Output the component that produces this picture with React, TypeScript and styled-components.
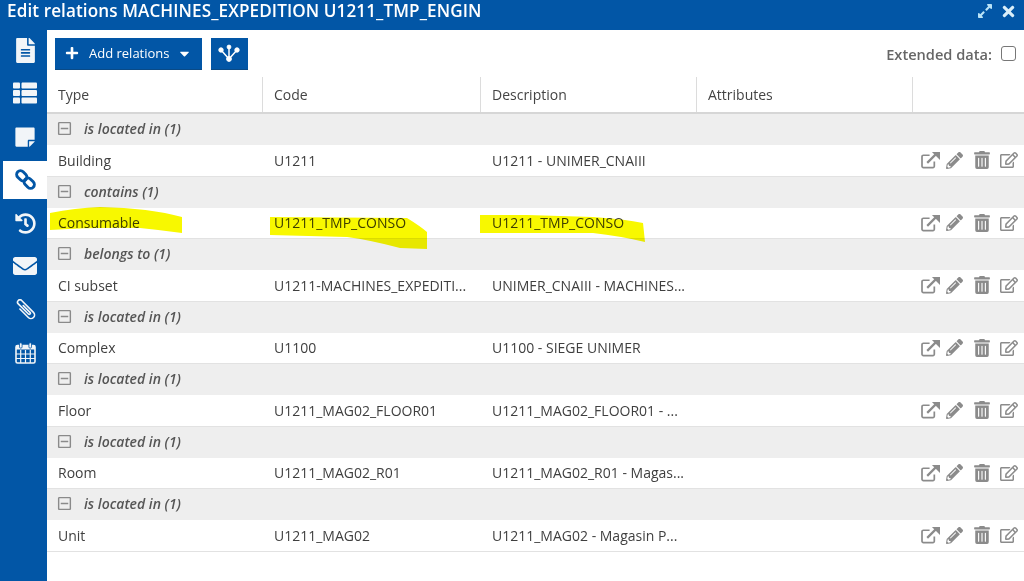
import React from "react";
import styled, { createGlobalStyle } from "styled-components";
import {
  FaCaretDown,
  FaEnvelope,
  FaExpandAlt,
  FaFileAlt,
  FaHistory,
  FaPencilAlt,
  FaPlus,
  FaRegEdit,
  FaRegMinusSquare,
  FaStickyNote,
  FaThList,
  FaTimes,
  FaTrashAlt,
} from "react-icons/fa";

const BLUE = "#0256a6";

const GlobalStyle = createGlobalStyle`
  html, body {
    margin: 0;
    padding: 0;
    background: #fff;
    overflow: hidden;
  }
  body {
    font-family: "Open Sans", "Liberation Sans", sans-serif;
    color: #3d3d3d;
  }
`;

const Page = styled.div`
  position: relative;
  width: 1024px;
  height: 581px;
  display: flex;
  flex-direction: column;
  overflow: hidden;
`;

const TitleBar = styled.header`
  height: 30px;
  flex: none;
  background: ${BLUE};
  color: #fff;
  display: flex;
  align-items: center;
  padding: 0 7.5px 0 7px;
  font-size: 17.1px;
  font-weight: 600;
`;

const Title = styled.div`
  flex: 1;
  margin-top: -9px;
  letter-spacing: 0.1px;
`;

const WindowButtons = styled.div`
  display: flex;
  align-items: center;
  gap: 6.5px;
  margin-top: -8px;
`;

const ExpandIcon = styled(FaExpandAlt)`
  color: #b9e3f7;
  font-size: 16px;
`;

const CloseIcon = styled(FaTimes)`
  color: #d9eef9;
  font-size: 17px;
`;

const Body = styled.div`
  flex: 1;
  display: flex;
  min-height: 0;
`;

const Sidebar = styled.nav`
  width: 47px;
  flex: none;
  background: ${BLUE};
  display: flex;
  flex-direction: column;
  gap: 5.3px;
  padding-top: 1px;
  box-sizing: border-box;
`;

const Tab = styled.div<{ $active?: boolean }>`
  height: 38px;
  flex: none;
  margin-left: 3px;
  display: flex;
  align-items: center;
  justify-content: center;
  color: ${(p) => (p.$active ? BLUE : "#f2f5f8")};
  background: ${(p) => (p.$active ? "#fff" : "transparent")};
`;

const Main = styled.main`
  flex: 1;
  min-width: 0;
  display: flex;
  flex-direction: column;
`;

const Toolbar = styled.div`
  height: 47px;
  flex: none;
  display: flex;
  align-items: center;
  padding: 0 8px 0 8px;
  gap: 9px;
`;

const ToolButton = styled.button`
  height: 32px;
  border: 0;
  border-bottom: 1px solid #0a4a86;
  background: ${BLUE};
  color: #fff;
  display: flex;
  align-items: center;
  padding: 0 10px;
  font-family: inherit;
  font-size: 13px;
`;

const GraphButton = styled(ToolButton)`
  padding: 0 7.5px;
`;

const AddLabel = styled.span`
  margin: 0 7px 0 10px;
`;

const Spacer = styled.div`
  flex: 1;
`;

const ExtendedLabel = styled.label`
  display: flex;
  align-items: center;
  gap: 9px;
  font-size: 14.6px;
  font-weight: 600;
  color: #666;
`;

const CheckBox = styled.span`
  width: 13px;
  height: 13px;
  border: 1px solid #777;
  border-radius: 3px;
  background: #fff;
`;

const columns = "216px 218px 216px 216px 1fr";

const HeaderRow = styled.div`
  height: 37px;
  flex: none;
  display: grid;
  grid-template-columns: ${columns};
  box-sizing: border-box;
  border-bottom: 2px solid #d6d6d6;
`;

const HeaderCell = styled.div`
  display: flex;
  align-items: center;
  padding-left: 11px;
  font-size: 14px;
  color: #444;
  border-right: 1px solid #dcdcdc;
  &:last-child {
    border-right: 0;
  }
`;

const GroupRow = styled.div`
  height: 31px;
  box-sizing: border-box;
  background: #eeeeee;
  display: flex;
  align-items: center;
  padding: 0 0 2px 10px;
  font-size: 14px;
  font-style: italic;
  font-weight: 600;
  color: #555;
`;

const GroupIcon = styled(FaRegMinusSquare)`
  font-size: 15px;
  color: #8a8a8a;
  margin-right: 12px;
`;

const DataRow = styled.div`
  height: 31.5px;
  box-sizing: border-box;
  display: grid;
  grid-template-columns: ${columns};
  border-bottom: 1px solid #e2e2e2;
  background: #fff;
`;

const DataCell = styled.div`
  display: flex;
  align-items: center;
  padding: 0 0 0 11px;
  font-size: 14px;
  color: #3f3f3f;
  white-space: nowrap;
  min-width: 0;
`;

const Actions = styled.div`
  display: flex;
  align-items: center;
  justify-content: flex-end;
  gap: 9.5px;
  padding-right: 6px;
  color: #8b8b8b;
  font-size: 18px;
`;

const PencilIcon = styled(FaPencilAlt)`
  font-size: 17px;
  margin-left: -4px;
`;

const HighlightLayer = styled.svg`
  position: absolute;
  left: 0;
  top: 0;
  width: 1024px;
  height: 581px;
  pointer-events: none;
  mix-blend-mode: multiply;
`;

const OpenIcon = () => (
  <svg width="20" height="18" viewBox="0 0 21 19" fill="none" stroke="currentColor">
    <path d="M14 11v5a1.5 1.5 0 0 1-1.5 1.5h-10A1.5 1.5 0 0 1 1 16V6a1.5 1.5 0 0 1 1.5-1.5H9" strokeWidth="1.800" />
    <path d="M6.5 12.5 16 3" strokeWidth="2.400" />
    <path d="M11.5 1h8.500v8.500z" fill="currentColor" stroke="none" />
  </svg>
);

const RelationGraphIcon = () => (
  <svg width="22" height="18" viewBox="0 0 22 18" fill="#fff" stroke="#fff">
    <circle cx="11" cy="3" r="1.900" />
    <circle cx="3" cy="6" r="2.200" />
    <circle cx="19" cy="6" r="2.200" />
    <circle cx="11" cy="15" r="2.400" />
    <path d="M11 3v12M3 6l8 9M19 6l-8 9" fill="none" strokeWidth="1.500" />
  </svg>
);

const LinkIcon = () => (
  <svg width="21" height="21" viewBox="-11 -11 22 22" fill="none" stroke="currentColor" strokeWidth="3">
    <g transform="rotate(45)">
      <rect x="-11.500" y="-4" width="12" height="8" rx="4" />
      <rect x="-0.500" y="-4" width="12" height="8" rx="4" />
    </g>
  </svg>
);

const ClipIcon = () => (
  <svg width="21" height="21" viewBox="-11 -11 22 22" fill="none" stroke="currentColor" strokeWidth="1.700">
    <path
      transform="rotate(-45)"
      d="M-3.800-4.500V8a3.800 3.800 0 0 0 7.600 0V-9.500a2.500 2.500 0 0 0-5 0V5.500a1.200 1.200 0 0 0 2.400 0V-4.500"
      strokeLinecap="round"
    />
  </svg>
);

const CalendarIcon = () => (
  <svg width="21" height="22" viewBox="0 0 21 22" fill="none" stroke="currentColor">
    <rect x="1" y="3.500" width="19" height="17.500" rx="1.500" strokeWidth="1.600" />
    <path d="M1 5.500h19" strokeWidth="4" />
    <path d="M1 12h19M1 16.500h19M5.700 8v13M10.500 8v13M15.300 8v13" strokeWidth="1.200" />
    <rect x="4.500" y="0.700" width="2.600" height="5.500" rx="1.300" fill="currentColor" stroke={BLUE} strokeWidth="0.800" />
    <rect x="13.900" y="0.700" width="2.600" height="5.500" rx="1.300" fill="currentColor" stroke={BLUE} strokeWidth="0.800" />
  </svg>
);

const tabs = [
  <FaFileAlt key="file" size={25} />,
  <FaThList key="list" size={24} />,
  <FaStickyNote key="note" size={22} />,
  <LinkIcon key="link" />,
  <FaHistory key="history" size={21} />,
  <FaEnvelope key="mail" size={24} />,
  <ClipIcon key="clip" />,
  <CalendarIcon key="calendar" />,
];

const relations = [
  { group: "is located in (1)", type: "Building", code: "U1211", description: "U1211 - UNIMER_CNAIII" },
  { group: "contains (1)", type: "Consumable", code: "U1211_TMP_CONSO", description: "U1211_TMP_CONSO" },
  {
    group: "belongs to (1)",
    type: "CI subset",
    code: "U1211-MACHINES_EXPEDITI...",
    description: "UNIMER_CNAIII - MACHINES...",
  },
  { group: "is located in (1)", type: "Complex", code: "U1100", description: "U1100 - SIEGE UNIMER" },
  {
    group: "is located in (1)",
    type: "Floor",
    code: "U1211_MAG02_FLOOR01",
    description: "U1211_MAG02_FLOOR01 - ...",
  },
  {
    group: "is located in (1)",
    type: "Room",
    code: "U1211_MAG02_R01",
    description: "U1211_MAG02_R01 - Magas...",
  },
  {
    group: "is located in (1)",
    type: "Unit",
    code: "U1211_MAG02",
    description: "U1211_MAG02 - Magasin P...",
  },
];

const App: React.FC = () => {
  return (
    <Page>
      <GlobalStyle />
      <TitleBar>
        <Title>Edit relations MACHINES_EXPEDITION U1211_TMP_ENGIN</Title>
        <WindowButtons>
          <ExpandIcon />
          <CloseIcon />
        </WindowButtons>
      </TitleBar>
      <Body>
        <Sidebar>
          {tabs.map((icon, i) => (
            <Tab key={i} $active={i === 3}>
              {icon}
            </Tab>
          ))}
        </Sidebar>
        <Main>
          <Toolbar>
            <ToolButton>
              <FaPlus size={14} />
              <AddLabel>Add relations</AddLabel>
              <FaCaretDown size={15} />
            </ToolButton>
            <GraphButton>
              <RelationGraphIcon />
            </GraphButton>
            <Spacer />
            <ExtendedLabel>
              Extended data:
              <CheckBox />
            </ExtendedLabel>
          </Toolbar>
          <HeaderRow>
            <HeaderCell>Type</HeaderCell>
            <HeaderCell>Code</HeaderCell>
            <HeaderCell>Description</HeaderCell>
            <HeaderCell>Attributes</HeaderCell>
            <HeaderCell />
          </HeaderRow>
          {relations.map((r) => (
            <React.Fragment key={r.type}>
              <GroupRow>
                <GroupIcon />
                {r.group}
              </GroupRow>
              <DataRow>
                <DataCell>{r.type}</DataCell>
                <DataCell>{r.code}</DataCell>
                <DataCell>{r.description}</DataCell>
                <DataCell />
                <Actions>
                  <OpenIcon />
                  <PencilIcon />
                  <FaTrashAlt />
                  <FaRegEdit />
                </Actions>
              </DataRow>
            </React.Fragment>
          ))}
        </Main>
      </Body>
      {/* marker strokes drawn over the screenshot */}
      <HighlightLayer viewBox="0 0 1024 581" fill="#f8f800">
        <path d="M50 213 Q75 208 100 207 Q150 208 182 217 L182 233 Q160 230 140 228 Q95 227 50 230z" />
        <path d="M270 217 L407 218 Q420 226 427 232 L427 249 L400 248 Q370 240 347 237 L270 235z" />
        <path d="M480 215 L527 215 L593 217 Q625 219 643 223 L645 242 Q620 236 593 233 L480 233z" />
      </HighlightLayer>
    </Page>
  );
};

export default App;
